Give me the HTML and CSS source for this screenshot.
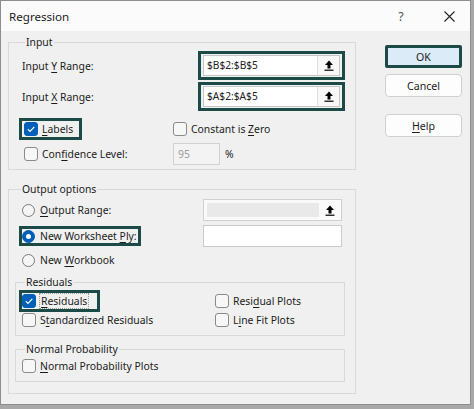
FILE: index.html
```html
<!DOCTYPE html>
<html>
<head>
<meta charset="utf-8">
<title>Regression</title>
<link rel="stylesheet" href="styles.css">
</head>
<body>
<div class="dialog">
  <div class="titlebar">
    <span class="title">Regression</span>
    <span class="help-q">?</span>
    <span class="close"><svg width="11" height="11" viewBox="0 0 11 11"><path d="M0.5 0.5 L10.5 10.5 M10.5 0.5 L0.5 10.5" stroke="#222" stroke-width="1.1" fill="none"/></svg></span>
  </div>
  <div class="body">
    <div class="main">
      <fieldset class="group group-input">
        <legend>Input</legend>
        <div class="row row-range">
          <span class="lbl">Input <u>Y</u> Range:</span>
          <div class="hl hl-range">
            <div class="range"><span class="range-text">$B$2:$B$5</span><span class="ref-btn"><svg width="10" height="11" viewBox="0 0 10 11"><path d="M5 0.5 L9 5 H6.5 V8.5 H3.5 V5 H1 Z" fill="#000"/><rect x="0.5" y="9.6" width="9" height="1.2" fill="#000"/></svg></span></div>
          </div>
        </div>
        <div class="row row-range row-range2">
          <span class="lbl">Input <u>X</u> Range:</span>
          <div class="hl hl-range">
            <div class="range"><span class="range-text">$A$2:$A$5</span><span class="ref-btn"><svg width="10" height="11" viewBox="0 0 10 11"><path d="M5 0.5 L9 5 H6.5 V8.5 H3.5 V5 H1 Z" fill="#000"/><rect x="0.5" y="9.6" width="9" height="1.2" fill="#000"/></svg></span></div>
          </div>
        </div>
        <div class="row two-col row-labels">
          <div class="hl hl-check">
            <span class="cb on"><svg width="12" height="12" viewBox="0 0 12 12"><path d="M2.8 6.2 L5 8.4 L9.3 3.8" stroke="#fff" stroke-width="1.2" fill="none"/></svg></span>
            <span class="ctext"><u>L</u>abels</span>
          </div>
          <div class="check"><span class="cb"></span><span class="ctext">Constant is <u>Z</u>ero</span></div>
        </div>
        <div class="row two-col row-conf">
          <div class="check check-pad"><span class="cb"></span><span class="ctext">Con<u>f</u>idence Level:</span></div>
          <div class="conf"><span class="num">95</span><span class="pct">%</span></div>
        </div>
      </fieldset>

      <fieldset class="group group-output">
        <legend>Output options</legend>
        <div class="orow orow1">
          <div class="check check-radio"><span class="rb"></span><span class="rtext"><u>O</u>utput Range:</span></div>
          <div class="range range-off"><span class="range-text"></span><span class="ref-btn"><svg width="10" height="11" viewBox="0 0 10 11"><path d="M5 0.5 L9 5 H6.5 V8.5 H3.5 V5 H1 Z" fill="#000"/><rect x="0.5" y="9.6" width="9" height="1.2" fill="#000"/></svg></span></div>
        </div>
        <div class="orow orow2">
          <div class="hl hl-radio"><span class="rb on"><span class="dot"></span></span><span class="rtext">New Worksheet <u>P</u>ly:</span></div>
          <div class="plain-input"></div>
        </div>
        <div class="orow orow3">
          <div class="check check-radio"><span class="rb"></span><span class="rtext">New <u>W</u>orkbook</span></div>
        </div>

        <fieldset class="group sub sub-res">
          <legend>Residuals</legend>
          <div class="srow two-col2 srow1">
            <div class="hl hl-res">
              <span class="cb on"><svg width="12" height="12" viewBox="0 0 12 12"><path d="M2.8 6.2 L5 8.4 L9.3 3.8" stroke="#fff" stroke-width="1.2" fill="none"/></svg></span>
              <span class="ctext focus"><u>R</u>esiduals</span>
            </div>
            <div class="check"><span class="cb"></span><span class="ctext">Resi<u>d</u>ual Plots</span></div>
          </div>
          <div class="srow two-col2 srow2">
            <div class="check check-pad3"><span class="cb"></span><span class="ctext">S<u>t</u>andardized Residuals</span></div>
            <div class="check"><span class="cb"></span><span class="ctext">L<u>i</u>ne Fit Plots</span></div>
          </div>
        </fieldset>

        <fieldset class="group sub sub-norm">
          <legend>Normal Probability</legend>
          <div class="srow srow-norm">
            <div class="check check-pad3"><span class="cb"></span><span class="ctext"><u>N</u>ormal Probability Plots</span></div>
          </div>
        </fieldset>
      </fieldset>
    </div>

    <div class="buttons">
      <div class="btn btn-ok">OK</div>
      <div class="btn btn-cancel">Cancel</div>
      <div class="btn btn-help"><u>H</u>elp</div>
    </div>
  </div>
</div>
</body>
</html>
```

FILE: styles.css
```css
* { box-sizing: border-box; }

body {
  margin: 0;
  background: #a8a8a8;
  font-family: "Noto Sans", "Open Sans", sans-serif;
  font-size: 10.4px;
  color: #1b1b1b;
}

u { text-decoration-thickness: 1px; text-underline-offset: 2px; }

.dialog {
  width: 471px;
  height: 405px;
  background: #f0f0f0;
  border: 1px solid #8e8e8e;
  display: flex;
  flex-direction: column;
}

.titlebar {
  height: 30px;
  flex: none;
  background: #fbfbfb;
  display: flex;
  align-items: center;
  padding: 0 11px 0 8px;
}
.title { font-size: 11.6px; }
.help-q {
  margin-left: auto;
  width: 20px;
  text-align: center;
  font-size: 12.5px;
  color: #555;
}
.close {
  margin-left: 28px;
  width: 20px;
  display: flex;
  justify-content: center;
}

.body {
  flex: 1;
  display: flex;
  padding: 4px 0 0 7px;
}

.main { width: 348px; }

fieldset.group {
  margin: 0;
  border: 1px solid #d9d9d9;
  min-inline-size: 0;
}
fieldset.group > legend {
  margin-left: 6px;
  padding: 0 1px;
  line-height: 14px;
  font-size: 10.4px;
}

.group-input { padding: 2px 10px 4px 10px; }

.row { display: flex; align-items: center; }
.row-range { height: 29px; justify-content: space-between; }
.row-range2 { margin-top: 2px; }
.lbl { margin-left: 3px; }

.hl {
  border: 3px solid #1c4a47;
  background: #eef2f2;
  white-space: nowrap;
}
.hl-range { padding: 1px 2px; }

.range {
  width: 137px;
  height: 21px;
  display: flex;
  border: 1px solid #c6c6c6;
  background: #fff;
}
.range-text {
  flex: 1;
  padding-left: 3px;
  line-height: 19px;
  font-size: 10.2px;
  color: #222;
}
.ref-btn {
  width: 22px;
  border-left: 1px solid #dedede;
  background: #f8f8f8;
  display: flex;
  align-items: center;
  justify-content: center;
}

.two-col { display: grid; grid-template-columns: 154px 1fr; align-items: center; }
.row-labels { margin-top: 7px; height: 22px; }
.row-conf { margin-top: 3px; height: 22px; }

.hl-check {
  display: flex;
  align-items: center;
  height: 22px;
  justify-self: start;
  padding: 0 6px 0 2px;
  background: #f0f0f0;
}

.check { display: flex; align-items: center; white-space: nowrap; }
.check-pad { padding-left: 5px; }
.check-pad3 { padding-left: 3px; }

.cb {
  width: 14px;
  height: 14px;
  flex: none;
  border: 1px solid #8a8a8a;
  border-radius: 3px;
  background: #f7f7f7;
  display: flex;
  align-items: center;
  justify-content: center;
}
.cb.on { background: #005fb8; border-color: #005fb8; }
.ctext { margin-left: 4px; }

.conf { display: flex; align-items: center; }
.num {
  width: 47px;
  height: 22px;
  border: 1px solid #d2d2d2;
  background: #f3f3f3;
  color: #9c9c9c;
  padding-left: 4px;
  line-height: 20px;
}
.pct { margin-left: 5px; }

.group-output {
  margin-top: 12px !important;
  padding: 3px 10px 11px 6px;
}

.orow {
  display: flex;
  align-items: center;
  justify-content: space-between;
  margin-left: 4px;
  margin-right: 3px;
}
.orow1 { height: 22px; }
.orow2 { height: 22px; margin-top: 4px; }
.orow3 { height: 20px; margin-top: 3px; }

.check-radio { padding-left: 3px; }
.rb {
  width: 13px;
  height: 13px;
  flex: none;
  border: 1px solid #7a7a7a;
  border-radius: 50%;
  background: #f5f5f5;
  display: flex;
  align-items: center;
  justify-content: center;
}
.rb.on { background: #005fb8; border-color: #005fb8; }
.dot { width: 5px; height: 5px; border-radius: 50%; background: #fff; }
.rtext { margin-left: 5px; }

.hl-radio {
  display: flex;
  align-items: center;
  height: 20px;
  padding-right: 1px;
  background: #f0f0f0;
}

.range-off {
  width: 139px;
  height: 22px;
  border: 1px solid #d0d0d0;
  background: #fafafa;
  padding: 3px 0 3px 3px;
}
.range-off .range-text { background: #e9e9e9; }
.range-off .ref-btn { background: #fafafa; border-left: none; margin-top: -3px; margin-bottom: -3px; }

.plain-input {
  width: 139px;
  height: 22px;
  border: 1px solid #cbcbcb;
  background: #fff;
}

fieldset.sub { padding: 1px 3px 6px 3px; }
.sub-res { margin-top: 5px !important; }
.sub-norm { margin-top: 6px !important; padding: 2px 3px 5px 3px; }

.srow { display: flex; align-items: center; }
.two-col2 { display: grid; grid-template-columns: 196px 1fr; align-items: center; }
.srow1 { height: 21px; }
.srow2 { height: 18px; }
.srow-norm { height: 18px; }

.hl-res {
  display: flex;
  align-items: center;
  height: 22px;
  justify-self: start;
  padding-right: 8px;
  background: #f0f0f0;
}
.hl-res .ctext { margin-left: 3px; }
.focus {
  border: 1px dotted #9a9a9a;
  padding: 0 1px;
  line-height: 14px;
}

.buttons {
  margin-left: 29px;
  width: 77px;
  padding-top: 10px;
}
.btn {
  height: 23px;
  border: 1px solid #d0d0d0;
  border-radius: 4px;
  background: #fdfdfd;
  display: flex;
  align-items: center;
  justify-content: center;
  font-size: 10.6px;
}
.btn-ok {
  border: 3px solid #1c4a47;
  border-radius: 2px;
  background: #dcebf8;
}
.btn-cancel { margin-top: 6px; }
.btn-help { margin-top: 17px; }
```
